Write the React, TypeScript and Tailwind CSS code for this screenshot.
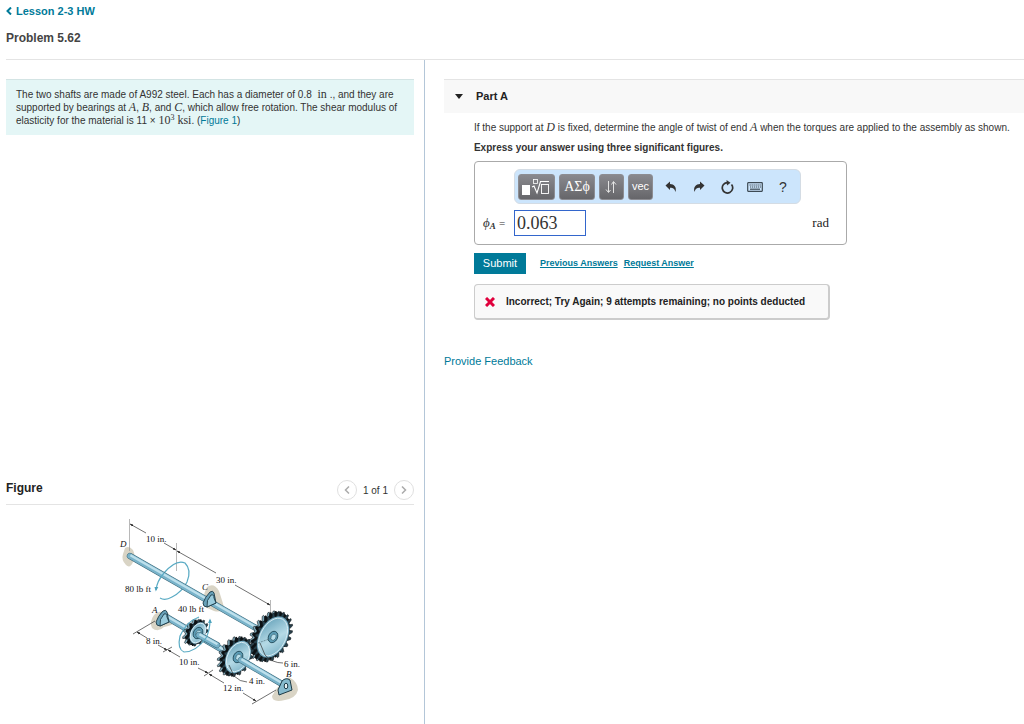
import type { ReactNode } from "react";

const sans = "font-['Liberation_Sans',Arial,sans-serif]";
const serif = "font-['Liberation_Serif','Times_New_Roman',serif]";

function MathVar({ children }: { children: ReactNode }) {
  return <i className="font-['Liberation_Serif',serif] text-xs leading-3">{children}</i>;
}

/* Points of a toothed rim, seen as a tilted ellipse */
function rim(cx: number, cy: number, rx: number, ry: number, teeth: number, depth: number) {
  const tilt = (28 * Math.PI) / 180;
  const points: string[] = [];
  for (let i = 0; i < teeth * 4; i++) {
    const a = (i / (teeth * 4)) * Math.PI * 2;
    const k = i % 4 < 2 ? 1 : 1 - depth;
    const x = Math.cos(a) * rx * k;
    const y = Math.sin(a) * ry * k;
    const px = cx + x * Math.cos(tilt) - y * Math.sin(tilt);
    const py = cy + x * Math.sin(tilt) + y * Math.cos(tilt);
    points.push(`${px.toFixed(1)},${py.toFixed(1)}`);
  }
  return points.join(" ");
}

type GearProps = { cx: number; cy: number; rx: number; ry: number; teeth: number; depth: number; hub: number };

function Gear({ cx, cy, rx, ry, teeth, depth, hub }: GearProps) {
  return (
    <g>
      <polygon points={rim(cx - 5, cy - 1, rx, ry, teeth, depth)} fill="#7fa9b9" stroke="#10181c" strokeWidth="0.6" />
      <polygon points={rim(cx - 3, cy - 1, rx, ry, teeth, depth)} fill="#0c1215" />
      <polygon points={rim(cx - 2, cy, rx, ry, teeth, depth)} fill="#0c1215" />
      <polygon points={rim(cx, cy, rx, ry, teeth, depth)} fill="#27404b" stroke="#10181c" strokeWidth="0.6" />
      <g transform={`rotate(28 ${cx} ${cy})`}>
        <ellipse cx={cx} cy={cy} rx={rx * 0.82} ry={ry * 0.82} fill="#78aec4" />
        <ellipse cx={cx} cy={cy} rx={rx * 0.74} ry={ry * 0.75} fill="url(#face)" stroke="#e4f3f8" strokeWidth="0.8" />
        <ellipse cx={cx} cy={cy} rx={hub * 0.75} ry={hub} fill="#5d9db6" stroke="#1b4454" strokeWidth="0.8" />
        <ellipse cx={cx + 0.5} cy={cy} rx={hub * 0.4} ry={hub * 0.55} fill="#b9dfeb" stroke="#1b4454" strokeWidth="0.5" />
      </g>
    </g>
  );
}

function Shaft({ d }: { d: string }) {
  return (
    <g fill="none">
      <path d={d} stroke="#3a6677" strokeWidth="6.4" strokeLinecap="round" />
      <path d={d} stroke="#79b3ca" strokeWidth="5.4" strokeLinecap="round" />
      <path d={d} stroke="#bde0ec" strokeWidth="2.4" transform="translate(0.4 -0.8)" />
    </g>
  );
}

function Bearing({ x, y }: { x: number; y: number }) {
  return (
    <g transform={`translate(${x} ${y})`} stroke="#1c3a46" strokeWidth="0.9" strokeLinejoin="round">
      <path d="M-6 4 Q-4 -2 1 -7 Q4 -9 5 -6 L7 4 L-2 8 Q-6 8 -6 4 Z" fill="#68a1b8" />
      <path d="M-2 8 Q-3 1 2 -4 Q5 -5 5 -1 L7 4 Z" fill="#9accdd" />
    </g>
  );
}

function ShaftFigure() {
  return (
    <svg viewBox="110 510 200 200" className="h-[200px] w-[200px]" role="img" aria-label="Two geared shafts">
      <defs>
        <linearGradient id="face" x1="0" y1="0" x2="1" y2="1">
          <stop offset="0" stopColor="#5e9cb5" />
          <stop offset="0.55" stopColor="#b5dae6" />
          <stop offset="1" stopColor="#74adc3" />
        </linearGradient>
        <marker id="tip" viewBox="0 0 6 6" refX="5.5" refY="3" markerWidth="5" markerHeight="5" orient="auto-start-reverse">
          <path d="M0 1 L6 3 L0 5 Z" fill="#222" />
        </marker>
        <marker id="turn" viewBox="0 0 6 6" refX="4" refY="3" markerWidth="4" markerHeight="4" orient="auto">
          <path d="M0 0.5 L6 3 L0 5.5 Z" fill="#4da3bd" />
        </marker>
      </defs>

      {/* wall patches */}
      <g fill="#d9d4c5">
        <path d="M125 548 Q129 545 133 550 Q136 556 133 562 Q130 569 126 565 Q121 560 123 554 Z" />
        <path d="M207 587 Q214 582 219 591 Q221 597 224 607 Q222 613 214 611 L205 607 Q201 598 207 587 Z" />
        <path d="M154 615 Q160 609 168 613 L176 622 Q171 626 164 627 Q158 633 152 628 Q149 622 154 615 Z" />
        <path d="M277 688 L289 677 Q298 682 298 690 Q296 698 285 700 Q272 703 272 696 Z" />
      </g>

      {/* dimension lines */}
      <g fill="none" stroke="#333" strokeWidth="0.7">
        <path d="M129.500 519V551M176.500 543V571M270.500 600V614" stroke="#999" />
        <path d="M130 524L146 533" markerStart="url(#tip)" />
        <path d="M164 543L176 550" markerEnd="url(#tip)" />
        <path d="M177 551L216 573" markerStart="url(#tip)" />
        <path d="M235 585L270 605" markerEnd="url(#tip)" />
        <path d="M133 634L155 621M163 652L172 647M204 676L213 670M252 704L276 690" />
        <path d="M137 632L147 638" markerStart="url(#tip)" />
        <path d="M158 645L167 650" markerEnd="url(#tip)" />
        <path d="M168 650L180 657" markerStart="url(#tip)" />
        <path d="M198 668L208 673" markerEnd="url(#tip)" />
        <path d="M209 674L224 683" markerStart="url(#tip)" />
        <path d="M243 693L256 701" markerEnd="url(#tip)" />
      </g>

      {/* back half of the upper torque arc */}
      <path d="M164 573 Q176 559 185 563 Q192 570 187 582 Q182 592 172 597 Q165 601 160 598" fill="none" stroke="#5aabc4" strokeWidth="1.200" />

      {/* upper shaft */}
      <Shaft d="M130 556L268 635" />
      <Bearing x={209} y={599} />
      <path d="M164 573Q157 581 156 590" fill="none" stroke="#5aabc4" strokeWidth="1.200" markerEnd="url(#turn)" />
      <Gear cx={273} cy={637} rx={17} ry={27} teeth={22} depth={0.17} hub={6} />

      {/* lower shaft */}
      <Shaft d="M163 615L238 659" />
      <Bearing x={162} y={618} />
      <Gear cx={198} cy={633} rx={9} ry={14} teeth={11} depth={0.24} hub={6} />
      <Gear cx={238} cy={657} rx={14} ry={21} teeth={17} depth={0.2} hub={6} />
      <Shaft d="M241 660L282 684" />
      <Shaft d="M199 635L217 645" />
      <g stroke="#1c3a46" strokeWidth="1" strokeLinejoin="round">
        <path d="M278 690L282 681Q286 677 290 680L292 690L279 695Z" fill="#86bacd" />
        <ellipse cx="286" cy="686" rx="1.800" ry="2.800" fill="#e8f3f6" />
      </g>
      <path d="M199 617Q186 622 180 636Q177 649 184 652Q196 652 206 638Q210 630 210 620" fill="none" stroke="#5aabc4" strokeWidth="1.200" markerEnd="url(#turn)" />

      {/* radius leaders */}
      <g fill="none" stroke="#333" strokeWidth="0.7">
        <path d="M258 643L272 638" strokeDasharray="2 1" stroke="#56727d" />
        <path d="M260 643L265 655Q272 663 283 663" />
        <path d="M229 665L234 676Q240 682 247 682" />
      </g>

      <g className={serif} fontSize="9" fill="#111">
        <text x="146" y="542">10 in.</text>
        <text x="216" y="583">30 in.</text>
        <text x="125" y="592">80 lb ft</text>
        <text x="178" y="612">40 lb ft</text>
        <text x="146" y="644">8 in.</text>
        <text x="179" y="665">10 in.</text>
        <text x="223" y="691">12 in.</text>
        <text x="249" y="684">4 in.</text>
        <text x="284" y="667">6 in.</text>
        <g fontStyle="italic">
          <text x="120" y="547">D</text>
          <text x="202" y="590">C</text>
          <text x="152" y="613">A</text>
          <text x="286" y="677">B</text>
        </g>
      </g>
    </svg>
  );
}

const keyClass =
  "flex h-[26px] items-center justify-center rounded-[3px] border border-[#8d8d92] bg-linear-to-b from-[#89898e] to-[#66666a] text-white";
const iconButton = "flex h-6 w-[18px] items-center justify-center text-[#333]";
const pagerButton = "flex size-5 items-center justify-center rounded-full border border-[#e0e0e0]";

function Toolbar() {
  return (
    <div className="flex h-[35px] w-[287px] items-center rounded-md border border-[#d4dce4] bg-[#cce5fc] px-[3px]">
      <div className="flex gap-1">
        <button aria-label="Templates" className={`${keyClass} w-[37px]`}>
          <svg viewBox="0 0 30 18" className="h-[18px] w-[30px]" fill="none" stroke="white">
            <rect x="1" y="7" width="8" height="10" fill="white" stroke="none" />
            <rect x="12.500" y="1.500" width="4" height="4" strokeWidth="0.8" />
            <path d="M11 9L13 8L16 15L19.500 3.500H28" strokeWidth="1.100" />
            <rect x="20.500" y="6.500" width="7" height="9" strokeWidth="0.9" />
          </svg>
        </button>
        <button aria-label="Symbols" className={`${keyClass} ${serif} w-[36px] text-sm leading-4`}>ΑΣϕ</button>
        <button aria-label="Arrows" className={`${keyClass} w-[25px]`}>
          <svg viewBox="0 0 12 14" className="h-[14px] w-3" fill="none" stroke="#e4e4e4">
            <path d="M3.500 1V12M1 9.500L3.500 12.500L5.500 10M8.500 13V2M6.500 4.500L8.500 1.500L11 4.500" />
          </svg>
        </button>
        <button className={`${keyClass} w-[25px] text-[11px]`}>vec</button>
      </div>
      <div className="ml-[9px] flex gap-[10px]">
        <button aria-label="Undo" className={iconButton}>
          <svg viewBox="0 0 12 12" className="h-3 w-3" fill="#333">
            <path d="M0.500 4.500L5 0.500V3C9 3 12 6 10.500 11C9.500 8 8.500 6.800 5 6.800V9Z" />
          </svg>
        </button>
        <button aria-label="Redo" className={iconButton}>
          <svg viewBox="0 0 12 12" className="h-3 w-3" fill="#333">
            <path d="M11.500 4.500L7 0.500V3C3 3 0 6 1.500 11C2.500 8 3.500 6.800 7 6.800V9Z" />
          </svg>
        </button>
        <button aria-label="Reset" className={iconButton}>
          <svg viewBox="0 0 14 14" className="h-[14px] w-[14px]">
            <path d="M7.500 2.600A5.200 5.200 0 1 0 11.500 4.500" fill="none" stroke="#333" strokeWidth="1.700" />
            <path d="M6.500 0L10.500 2.700L7 5.500Z" fill="#333" />
          </svg>
        </button>
        <button aria-label="Keyboard shortcuts" className={iconButton}>
          <svg viewBox="0 0 16 10" className="h-[10px] w-4" fill="none" stroke="#3d4a54">
            <rect x="0.700" y="0.700" width="14.600" height="8.600" rx="0.500" strokeWidth="1.200" />
            <path d="M2.500 3H14M3 5H14" strokeDasharray="1.300 0.700" />
            <path d="M3 7.200H13" strokeWidth="1.200" />
          </svg>
        </button>
        <button aria-label="Help" className={`${iconButton} text-sm`}>?</button>
      </div>
    </div>
  );
}

export default function App() {
  return (
    <div className={`flex min-h-screen flex-col bg-white text-[10px] text-[#333] ${sans}`}>
      <header className="ml-[6px] h-[60px] border-b border-[#e4e4e4] pt-1">
        <a href="#" className="flex items-center gap-1 text-[11px] leading-[14px] font-bold text-[#007a99]">
          <svg viewBox="0 0 6 8" className="h-2 w-[6px]" fill="none" stroke="currentColor" strokeWidth="2">
            <path d="M5 0.500L1.500 4L5 7.500" />
          </svg>
          Lesson 2-3 HW
        </a>
        <h1 className="mt-3 text-xs leading-4 font-bold text-[#444]">Problem 5.62</h1>
      </header>

      <div className="flex flex-1">
        {/* Problem statement and figure */}
        <div className="flex w-[41.5%] flex-col border-r border-[#b3c6d8] pr-[10px] pl-[6px]">
          <section className="flex-1 pt-[19px]">
            <p className="border-t border-[#d3e4e4] bg-[#e4f6f6] py-2 pr-2 pl-[10px] leading-[13px]">
              The two shafts are made of A992 steel. Each has a diameter of 0.8{" "}
              <span className={`${serif} ml-[3px] text-xs leading-3`}>in</span> ., and they are supported by bearings at{" "}
              <MathVar>A</MathVar>, <MathVar>B</MathVar>, and <MathVar>C</MathVar>, which allow free rotation. The shear
              modulus of elasticity for the material is 11 ×{" "}
              <span className={`${serif} text-xs leading-3`}>
                10<sup className="text-[8px]">3</sup> ksi
              </span>
              . (<a href="#figure" className="text-[#007a99]">Figure 1</a>)
            </p>
          </section>

          <section id="figure" className="pb-[14px]">
            <div className="flex h-[29px] items-start justify-between border-b border-[#e4e4e4]">
              <h2 className="pt-1 text-xs leading-4 font-bold text-[#222]">Figure</h2>
              <div className="flex items-center gap-[6px] pt-1">
                <button aria-label="Previous figure" className={pagerButton}>
                  <svg viewBox="0 0 6 8" className="h-2 w-[6px]" fill="none" stroke="#aaa" strokeWidth="1.500">
                    <path d="M5 0.500L1.500 4L5 7.500" />
                  </svg>
                </button>
                <span className="pt-[2px] leading-4">1 of 1</span>
                <button aria-label="Next figure" className={pagerButton}>
                  <svg viewBox="0 0 6 8" className="h-2 w-[6px]" fill="none" stroke="#aaa" strokeWidth="1.500">
                    <path d="M1 0.500L4.500 4L1 7.500" />
                  </svg>
                </button>
              </div>
            </div>
            <div className="flex justify-center pt-[5px]">
              <ShaftFigure />
            </div>
          </section>
        </div>

        {/* Question part */}
        <main className="min-w-0 flex-1 pt-[19px] pl-[19px]">
          <h2 className="flex h-[34px] items-center gap-[13px] border-t border-[#e4e4e4] bg-[#f8f8f8] pl-[11px] text-[11px] font-bold text-[#222]">
            <svg viewBox="0 0 8 5" className="h-[5px] w-2" fill="#222">
              <path d="M0 0H8L4 5Z" />
            </svg>
            Part A
          </h2>

          <div className="pl-[30px]">
            <p className="pt-2 leading-[13px]">
              If the support at <MathVar>D</MathVar> is fixed, determine the angle of twist of end <MathVar>A</MathVar>{" "}
              when the torques are applied to the assembly as shown.
            </p>
            <p className="mt-[7px] leading-[13px] font-bold">Express your answer using three significant figures.</p>

            <div className="mt-[7px] w-[373px] max-w-full rounded-[4px] border border-[#aaa] pt-[7px] pb-2">
              <div className="pl-[39px]">
                <Toolbar />
              </div>
              <div className="mt-[6px] flex items-center pr-[17px] pl-2">
                <label htmlFor="answer" className={`${serif} w-[31px] text-[13px] leading-4`}>
                  <i>ϕ</i>
                  <sub className="text-[9px] font-bold italic">A</sub> <span className="text-[11px]">=</span>
                </label>
                <input
                  id="answer"
                  defaultValue="0.063"
                  className={`${serif} h-[26px] w-[72px] border border-[#3366cc] px-[2px] text-lg leading-6 text-[#333]`}
                />
                <span className={`${serif} ml-auto text-[13px] leading-4 text-[#222]`}>rad</span>
              </div>
            </div>

            <div className="mt-2 flex items-center text-[9px] font-bold text-[#007a99]">
              <button className="h-[21px] w-[52px] bg-[#007a99] text-[11px] font-normal text-white">Submit</button>
              <a href="#" className="ml-[14px] underline">Previous Answers</a>
              <a href="#" className="ml-[6px] underline">Request Answer</a>
            </div>

            <div
              role="status"
              className="mt-[10px] flex h-9 w-[356px] max-w-full items-center gap-[11px] rounded-[4px] border border-r-2 border-b-2 border-[#ccc] bg-[#f9f9f9] px-[10px] font-bold text-[#222]"
            >
              <svg viewBox="0 0 10 10" className="size-[10px]" stroke="#e0003c" strokeWidth="3">
                <path d="M1 1L9 9M9 1L1 9" />
              </svg>
              Incorrect; Try Again; 9 attempts remaining; no points deducted
            </div>
          </div>

          <a href="#" className="mt-[34px] inline-block text-[11px] leading-[14px] text-[#007a99]">Provide Feedback</a>
        </main>
      </div>
    </div>
  );
}
